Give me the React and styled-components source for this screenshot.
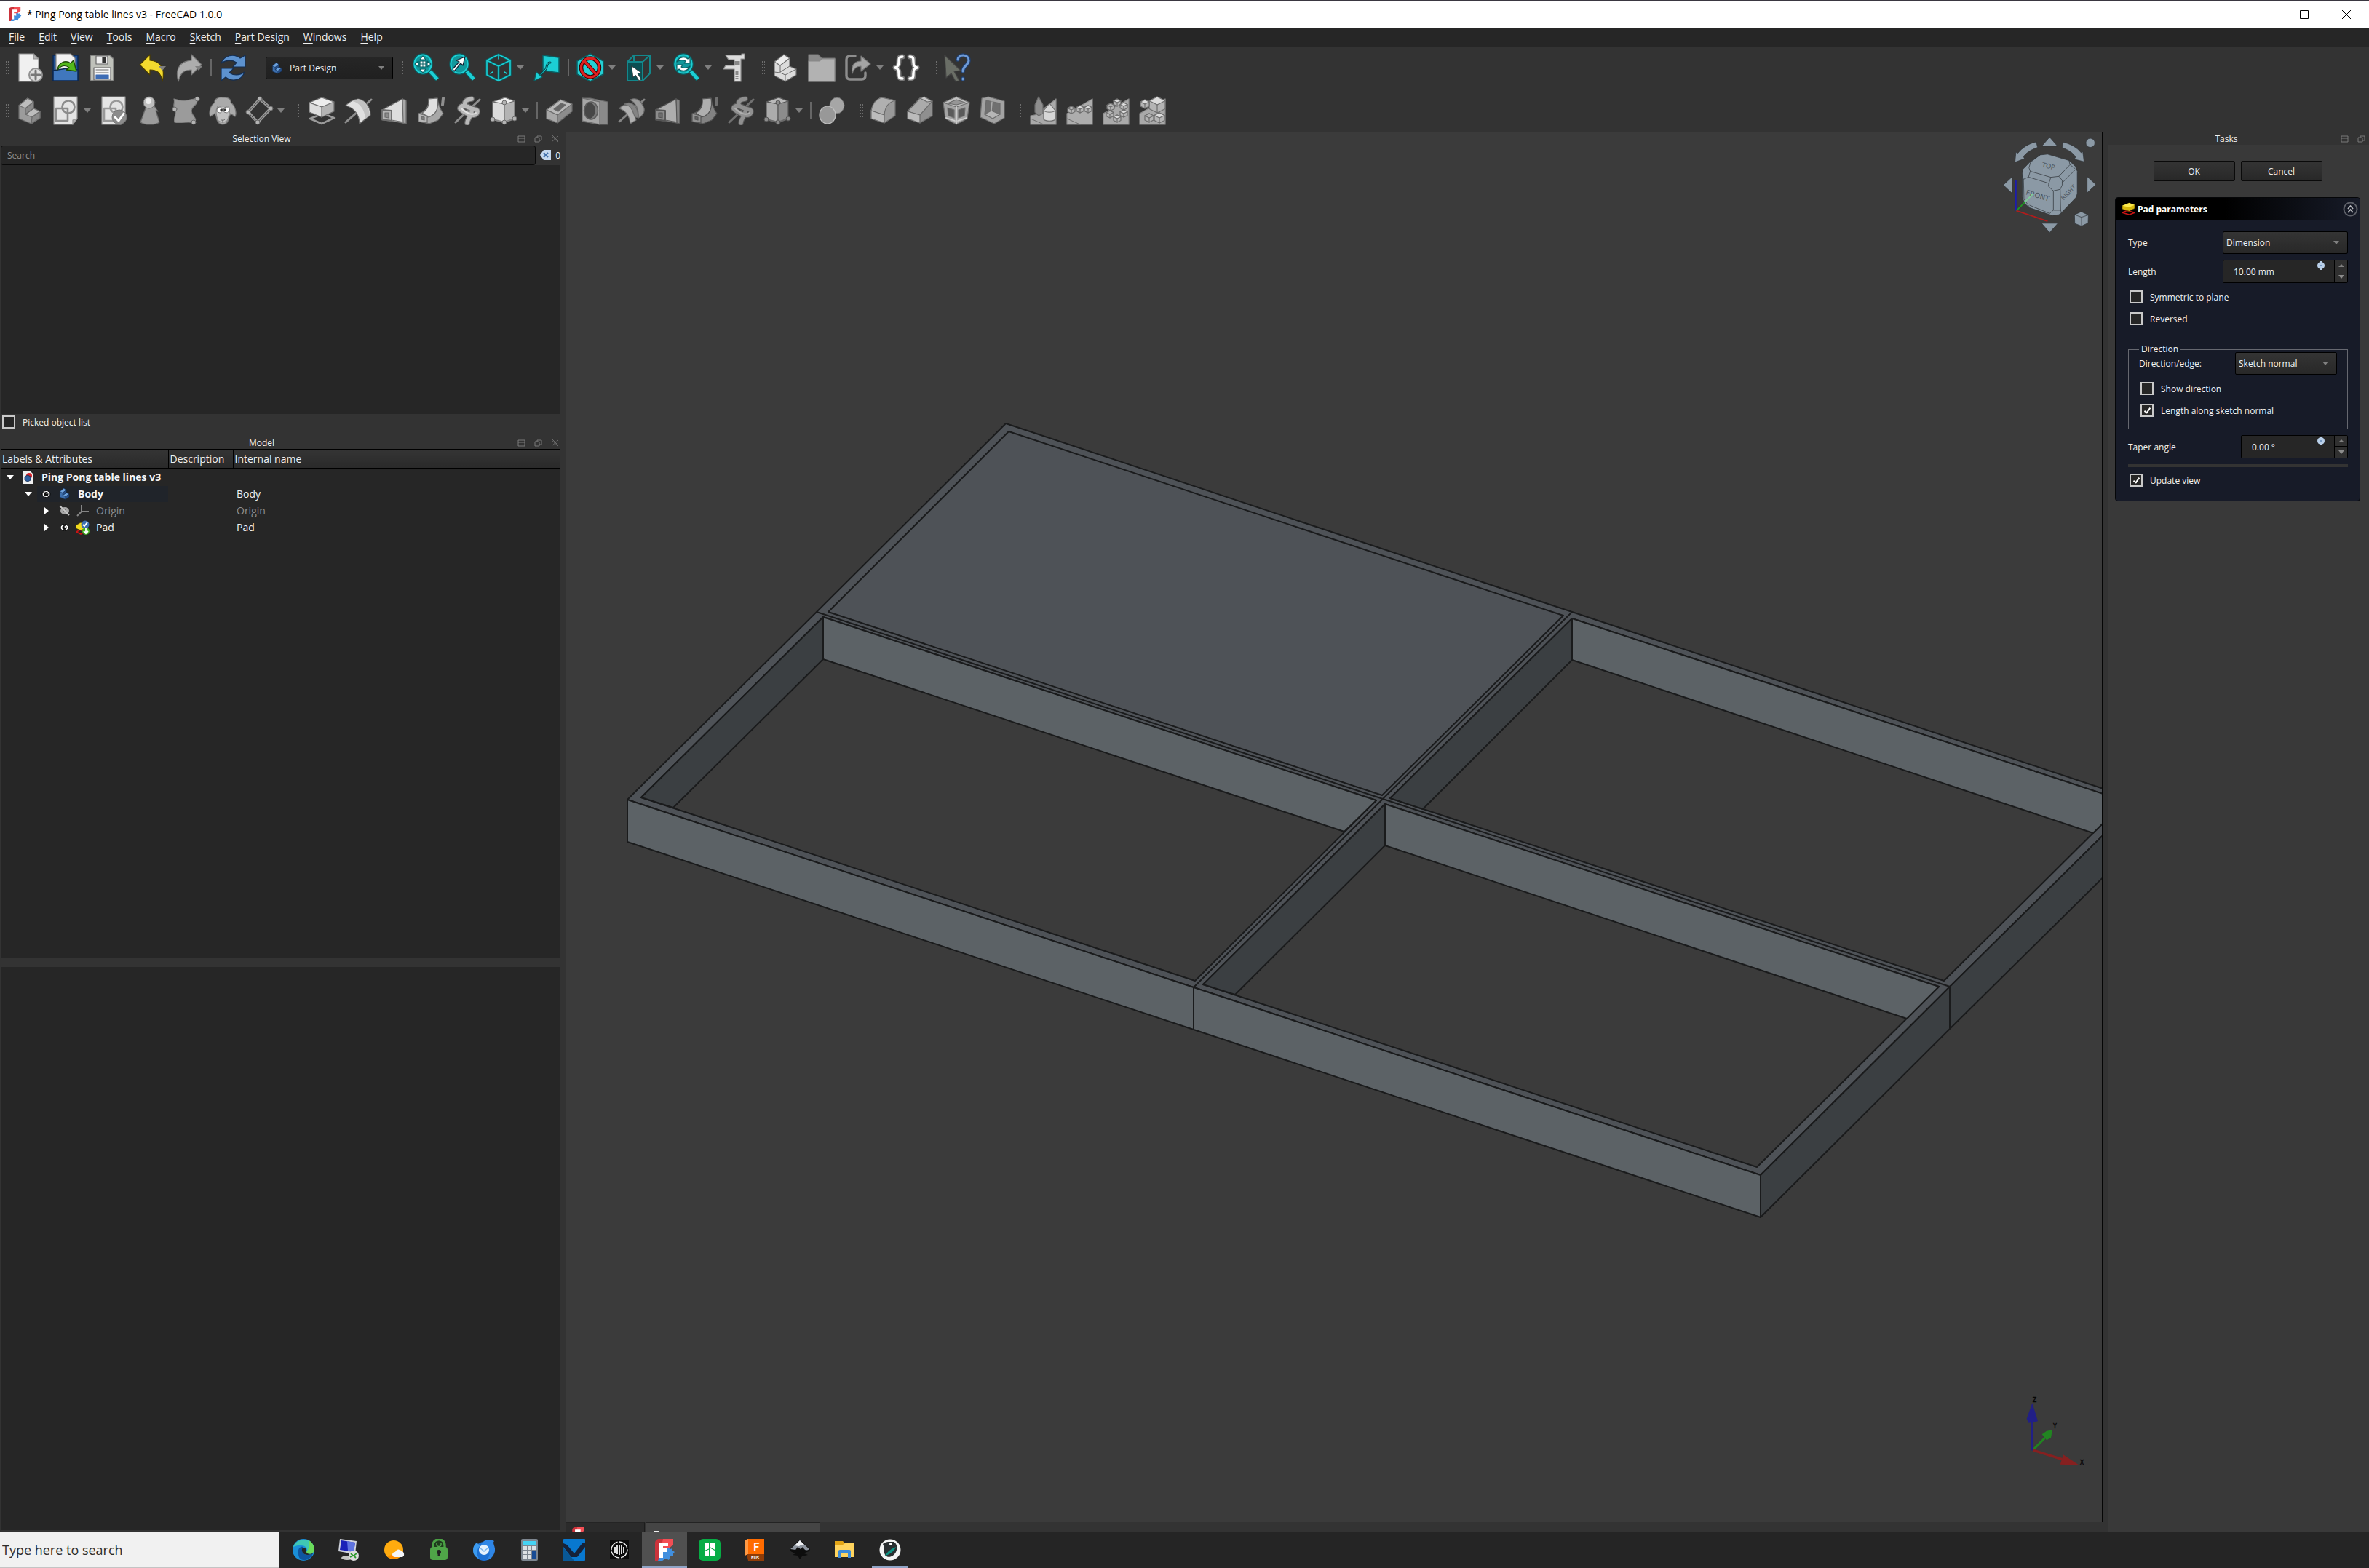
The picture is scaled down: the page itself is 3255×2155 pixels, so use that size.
import React from "react";
import styled, { createGlobalStyle, css } from "styled-components";

const GlobalStyle = createGlobalStyle`
  * { box-sizing: border-box; }
  html, body { margin: 0; padding: 0; background: #333333; }
  body, button, input, select, table {
    font-family: "Open Sans", "Noto Sans", "Liberation Sans", sans-serif;
    font-size: 12px;
    color: #f0f0f0;
  }
  button { background: none; border: 0; padding: 0; margin: 0; }
`;

/* ---------- frame ---------- */

const Window = styled.div`
  min-height: 100vh;
  display: flex;
  flex-direction: column;
  overflow: hidden;
`;

const TitleBar = styled.header`
  height: 38px;
  border-top: 1px solid #3a3741;
  background: #ffffff;
  display: flex;
  align-items: center;
  padding: 0 2px 0 11px;
`;

const Title = styled.h1`
  margin: 0 0 0 7px;
  flex: 1;
  font-size: 14px;
  font-weight: 400;
  color: #000000;
`;

const WindowButton = styled.button`
  width: 58px;
  height: 36px;
  display: grid;
  place-items: center;
`;

const MenuBar = styled.nav`
  height: 26px;
  background: #262626;
  display: flex;
  align-items: center;
  gap: 1px;
  padding-left: 3px;
`;

const MenuItem = styled.button`
  padding: 0 9px;
  font-size: 14px;
  line-height: 26px;
  u { text-underline-offset: 3px; text-decoration-thickness: 1px; }
`;

const ToolRow = styled.div`
  height: 59px;
  background: #333333;
  border-bottom: 1px solid #0c0c0c;
  display: flex;
  align-items: center;
  gap: 5px;
`;

const ToolGroup = styled.div`
  display: flex;
  align-items: center;
`;

const Handle = styled.span`
  width: 6px;
  height: 20px;
  margin: 0 2px 0 7px;
  background-image: radial-gradient(circle, #6e6e6e 1px, transparent 1px);
  background-size: 3px 4px;
`;

const ToolSeparator = styled.span`
  width: 2px;
  height: 24px;
  margin: 0 4px;
  background: #666666;
`;

const ToolButton = styled.button`
  width: ${(p) => (p.$menu ? 66 : 50)}px;
  height: 50px;
  padding-left: 5px;
  display: flex;
  align-items: center;
  gap: 5px;
  svg { width: 40px; height: 40px; flex: none; }
  &::after {
    content: ${(p) => (p.$menu ? '""' : "none")};
    border: 5px solid transparent;
    border-top: 6px solid #7f7f7f;
    border-bottom: 0;
  }
`;

const HistoryButton = styled(ToolButton)`
  position: relative;
  &::after {
    content: "";
    position: absolute;
    right: 7px;
    top: 23px;
    border: 5px solid transparent;
    border-top: 6px solid #7f7f7f;
    border-bottom: 0;
  }
`;

/* ---------- form parts ---------- */

const SelectBox = styled.span`
  position: relative;
  display: block;
  width: ${(p) => p.$width}px;
  height: 31px;
  svg { position: absolute; left: 7px; top: 7px; width: 17px; height: 17px; pointer-events: none; }
  &::after {
    content: "";
    position: absolute;
    right: 12px;
    top: 13px;
    border: 4px solid transparent;
    border-top: 5px solid #808080;
    border-bottom: 0;
  }
  select {
    appearance: none;
    width: 100%;
    height: 100%;
    padding: 0 20px 0 ${(p) => (p.$icon ? 32 : 4)}px;
    border: 1px solid #000000;
    border-radius: 2px;
    background: linear-gradient(${(p) => (p.$icon ? "#262626, #202020" : "#343434, #282828")});
  }
`;

const CheckRow = styled.label`
  display: flex;
  align-items: center;
  gap: 10px;
  height: 18px;
  padding-left: ${(p) => p.$indent || 0}px;
  input {
    appearance: none;
    margin: 0;
    width: 18px;
    height: 18px;
    border: 2px solid #c9c9c9;
    background: #262626;
    display: grid;
    place-items: center;
  }
  input:checked::after {
    content: "";
    width: 3px;
    height: 7px;
    margin-bottom: 2px;
    border: solid #ffffff;
    border-width: 0 2px 2px 0;
    transform: rotate(35deg);
  }
`;

const FieldRow = styled.div`
  display: flex;
  align-items: center;
  justify-content: space-between;
  height: ${(p) => p.$height || 31}px;
`;

const SpinBox = styled.span`
  width: ${(p) => p.$width}px;
  height: 32px;
  border: 1px solid #000000;
  border-radius: 2px;
  background: #262626;
  display: flex;
  input {
    flex: 1;
    min-width: 0;
    padding: 0 0 0 14px;
    border: 0;
    background: transparent;
  }
  > svg { margin: 1px 12px 0 0; width: 12px; height: 12px; }
`;

const Steppers = styled.span`
  width: 18px;
  display: grid;
  grid-template-rows: 1fr 1fr;
  background: #303030;
  border-left: 1px solid #000000;
`;

const StepButton = styled.button`
  display: grid;
  place-items: center;
  border-bottom: ${(p) => (p.$up ? "1px solid #000000" : "0")};
  &::after {
    content: "";
    border: 4px solid transparent;
    ${(p) => (p.$up ? "border-bottom: 4px solid #808080; border-top: 0;" : "border-top: 5px solid #8c8c8c; border-bottom: 0;")}
  }
`;

/* ---------- main area ---------- */

const Main = styled.main`
  flex: 1;
  display: grid;
  grid-template-columns: 777px minmax(0, 1fr) 366px;
`;

const LeftDock = styled.aside`
  background: #333333;
  padding: 0 7px 0 1px;
  display: grid;
  grid-template-columns: minmax(0, 1fr);
  grid-template-rows: 17px 28px 342fr 31px 17px 700fr 12px 774fr 2px;
`;

const DockTitle = styled.div`
  height: 17px;
  display: flex;
  align-items: center;
  justify-content: flex-end;
  position: relative;
  padding-right: ${(p) => p.$right}px;
  gap: 12px;
  background: #333333;
  h2 {
    position: absolute;
    left: 0;
    right: ${(p) => p.$inset}px;
    margin: 0;
    text-align: center;
    font-size: 12px;
    line-height: 16px;
    font-weight: 400;
  }
  button { position: relative; display: grid; }
`;

const SearchRow = styled.div`
  display: flex;
  align-items: center;
  gap: 6px;
  input {
    flex: 1;
    min-width: 0;
    height: 27px;
    padding: 0 8px;
    border: 1px solid #0a0a0a;
    border-radius: 3px;
    background: #262626;
  }
  input::placeholder { color: #8f8f8f; opacity: 1; }
  svg { width: 15px; height: 14px; display: block; }
`;

const DarkPane = styled.div`
  background: #262626;
  min-height: 0;
`;

const PickRow = styled.div`
  padding: 2px 0 0 2px;
`;

const Tree = styled.table`
  width: 100%;
  border-collapse: collapse;
  table-layout: fixed;
  font-size: 14px;
  th {
    height: 26px;
    padding: 0 2px;
    line-height: 22px;
    text-align: left;
    font-weight: 400;
    border: 1px solid #000000;
    border-left: 0;
    background: linear-gradient(#343434, #2a2a2a);
  }
  td { height: 23px; padding: 0; line-height: 22px; white-space: nowrap; }
  td:last-child { padding-left: 5px; }
`;

const TreeLine = styled.div`
  display: flex;
  align-items: center;
  height: 23px;
  margin-left: ${(p) => p.$level * 25}px;
  color: ${(p) => (p.$dim ? "#8f8f8f" : "#f5f5f5")};
  font-weight: ${(p) => (p.$bold ? 700 : 400)};
`;

const TreeCell = styled.div`
  display: flex;
  align-items: center;
  flex: 1;
  background: ${(p) => (p.$active ? "#20242a" : "transparent")};
  > span:last-child { margin-left: 6px; line-height: 22px; }
`;

const Slot = styled.span`
  width: 25px;
  display: grid;
  place-items: center;
`;

const Expander = styled.button`
  width: 25px;
  height: 22px;
  display: grid;
  place-items: center;
  &::after {
    content: "";
    border: 5px solid transparent;
    ${(p) =>
      p.$open
        ? css`border-top: 6px solid #ffffff; border-bottom: 0;`
        : css`border-left: 6px solid #ffffff; border-right: 0;`}
  }
`;

const Dim = styled.span`
  color: ${(p) => (p.$on ? "#8f8f8f" : "#f0f0f0")};
`;

const Center = styled.section`
  display: grid;
  grid-template-rows: minmax(0, 1fr) 13px;
  min-width: 0;
`;

const Viewport = styled.div`
  position: relative;
  background: #3b3b3b;
  border-right: 1px solid #050505;
  overflow: hidden;
  > svg:first-child { display: block; width: 100%; height: 100%; }
`;

const NavCubeBox = styled.div`
  position: absolute;
  right: 6px;
  top: 5px;
`;

const AxisBox = styled.div`
  position: absolute;
  right: 18px;
  bottom: 72px;
`;

const TabStrip = styled.div`
  background: #333333;
  display: flex;
  gap: 2px;
  overflow: hidden;
`;

const DocTab = styled.div`
  width: ${(p) => p.$width}px;
  padding: 6px 0 0 8px;
  border-top: 1px solid #242424;
  border-right: 1px solid #1c1c1c;
  background: ${(p) => (p.$active ? "#454545" : "#2b2b2b")};
`;

const RightDock = styled.aside`
  border-left: 7px solid #333333;
  background: #393939;
`;

const DialogButtons = styled.div`
  display: flex;
  justify-content: center;
  gap: 8px;
  padding: 22px 2px 22px 0;
`;

const DialogButton = styled.button`
  width: 112px;
  height: 28px;
  border: 1px solid #0a0a0a;
  border-radius: 2px;
  background: linear-gradient(#343434, #282828);
`;

const TaskBox = styled.section`
  margin: 0 12px 0 10px;
  border: 1px solid #050608;
  border-radius: 4px;
  background: #171b28;
  overflow: hidden;
`;

const TaskHeader = styled.div`
  height: 30px;
  display: flex;
  align-items: center;
  gap: 3px;
  padding: 0 2px 0 8px;
  background: linear-gradient(90deg, #000000 45%, #171b28);
  h2 { flex: 1; margin: 0; font-size: 12px; font-weight: 700; color: #ffffff; }
  svg { display: block; }
`;

const TaskBody = styled.div`
  display: flex;
  flex-direction: column;
  padding: 16px 16px 19px 17px;
`;

const Space = styled.div`
  height: ${(p) => p.$size}px;
`;

const Group = styled.fieldset`
  min-width: 0;
  margin: 0;
  padding: 0 14px 16px;
  border: 1px solid #666870;
  legend { padding: 0 3px; line-height: 8px; margin: 0; }
`;

const Rule = styled.div`
  height: 4px;
  background: #333333;
`;

/* ---------- taskbar ---------- */

const Taskbar = styled.footer`
  height: 50px;
  background: #252525;
  display: flex;
  align-items: stretch;
`;

const TaskSearch = styled.input`
  width: 383px;
  margin-right: 3px;
  padding: 0 3px;
  border: 0;
  border-bottom: 1px solid #c4c4c4;
  background: #f1f1f1;
  font-size: 18px;
  color: #222222;
  &::placeholder { color: #2d2d2d; opacity: 1; }
`;

const TaskButton = styled.button`
  width: 62px;
  display: grid;
  place-items: center;
  position: relative;
  background: ${(p) => (p.$active ? "#505050" : "transparent")};
  svg { width: 30px; height: 30px; }
  &::after {
    content: ${(p) => (p.$running ? '""' : "none")};
    position: absolute;
    bottom: 0;
    left: ${(p) => (p.$active ? 0 : 6)}px;
    right: ${(p) => (p.$active ? 0 : 6)}px;
    height: 3px;
    background: #90a4c6;
  }
`;

/* ---------- drawings ---------- */

const L = "#dcdcdc";
const M = "#b4b4b4";
const D = "#929292";
const K = "#6c6c6c";
const T = "#1ccfd4";
const TD = "#0a5f63";

const Icon = ({ children, box = 40 }) => (
  <svg viewBox={`0 0 ${box} ${box}`} fill="none" strokeLinejoin="round" strokeLinecap="round" aria-hidden="true">
    {children}
  </svg>
);
const G = ({ d, f = M, s = K, w = 1.2 }) => <path d={d} fill={f} stroke={s} strokeWidth={w} />;
const C = ({ x, y, r, f = M, s = K, w = 1 }) => <circle cx={x} cy={y} r={r} fill={f} stroke={s} strokeWidth={w} />;

const Step = ({ a = L, b = M, c = D, s = K }) => (
  <Icon>
    <G d="M6 13L18 3L26 8V17L35 21V30L23 38L6 31Z" f={b} s={s} />
    <G d="M6 13L18 3L26 8L15 17Z" f={a} s={s} />
    <G d="M15 25L26 17L35 21L24 29Z" f={a} s={s} />
    <G d="M15 17L26 8V17L15 25Z" f={c} s={s} />
    <G d="M24 29L35 21V30L23 38Z" f={c} s={s} />
  </Icon>
);

const Lens = ({ children }) => (
  <Icon>
    <path d="M26 25L36 36" stroke={TD} strokeWidth="7" strokeLinecap="butt" />
    <path d="M26 25L36 36" stroke={T} strokeWidth="4.6" strokeLinecap="butt" />
    <ellipse cx="16" cy="15" rx="13" ry="14" fill="#12989c" stroke={TD} strokeWidth="1.5" />
    <ellipse cx="16" cy="15" rx="11.6" ry="12.6" stroke={T} strokeWidth="2" />
    {children}
  </Icon>
);

const Cubelet = ({ x, y, r = 5, l = L }) => (
  <g>
    <G d={`M${x} ${y - r}L${x + r} ${y - r / 2}V${y + r / 2}L${x} ${y + r}L${x - r} ${y + r / 2}V${y - r / 2}Z`} f={M} />
    <G d={`M${x} ${y - r}L${x + r} ${y - r / 2}L${x} ${y}L${x - r} ${y - r / 2}Z`} f={l} />
    <G d={`M${x} ${y}V${y + r}`} />
  </g>
);

const Page = () => (
  <>
    <G d="M4 1H36V31L30 39H4Z" f="#e4e4e4" s={D} />
    <G d="M36 31L30 33V39Z" f={M} s={D} />
  </>
);

const I = {
  newDoc: (
    <Icon>
      <G d="M6 1H26L33 8V39H6Z" f="#f0f0f0" s={D} />
      <G d="M26 1V8H33Z" f={M} s={D} />
      <C x={29} y={30} r={9} f="#dedede" s={D} w={2} />
      <path d="M29 24V36M23 30H35" stroke="#777" strokeWidth="3" />
    </Icon>
  ),
  open: (
    <Icon>
      <G d="M3 3H37V38H3Z" f="#1f4f94" s="#0d2850" w={1.5} />
      <G d="M7 1H27L33 7V26H7Z" f="#f2f2f2" s="#888" />
      <G d="M3 24L22 21L37 23V38H3Z" f="#4077bd" s="#0d2850" w={1.5} />
      <G d="M9 23C10 13 20 9 27 14L31 10L35 25L21 23L25 20C20 16 14 17 9 23Z" f="#53b81c" s="#1e4a07" w={1.4} />
    </Icon>
  ),
  save: (
    <Icon>
      <G d="M4 3H31L36 8V38H4Z" f="#bfc1ba" s="#777" w={1.5} />
      <G d="M12 4H28V15H12Z" f="#efefef" s="#666" />
      <G d="M21 6H25V13H21Z" f="#333" s="#333" />
      <G d="M9 20H32V37H9Z" f="#f6f6f6" s="#666" />
      <path d="M12 23H29M12 27H29" stroke="#999" strokeWidth="1.3" />
      <G d="M12 30H29V35H12Z" f="#3e6db5" s="#3e6db5" />
    </Icon>
  ),
  undo: (
    <Icon>
      <G d="M2 16L16 2V10C30 11 38 21 33 39C31 27 26 23 16 23V30Z" f="#f3da2e" s="#4a3c00" w={1.2} />
    </Icon>
  ),
  redo: (
    <Icon>
      <G d="M37 16L23 2V10C8 11 0 21 5 39C8 27 13 23 23 23V30Z" f="#adadad" s="#777" />
    </Icon>
  ),
  refresh: (
    <Icon>
      <G d="M4 14C8 3 21 0 30 7L37 3V19H20L25 13C19 9 11 9 4 14Z" f="#5d92cf" s="#142e52" w={1.2} />
      <G d="M36 26C32 38 19 40 10 33L4 38V21H21L15 27C21 31 29 31 36 26Z" f="#5d92cf" s="#142e52" w={1.2} />
    </Icon>
  ),
  zoomFit: (
    <Lens>
      <G d="M16 4L20 9H12ZM16 27L20 22H12ZM5 15L10 11V19ZM27 15L22 11V19Z" f="#fff" s={TD} />
      <G d="M12 11H20V19H12Z" f="#fff" s={TD} />
      <path d="M16 11V19M12 15H20" stroke={TD} />
    </Lens>
  ),
  zoomSel: (
    <Lens>
      <G d="M9 25L7 22L16 12L12 10L24 5L21 17L18 14Z" f="#fff" s="#123" />
    </Lens>
  ),
  iso: (
    <Icon>
      <path d="M20 2L36 10V30L20 38L4 30V10ZM4 10L20 18L36 10M20 18V38" stroke={TD} strokeWidth="3.6" />
      <path d="M20 2L36 10V30L20 38L4 30V10ZM4 10L20 18L36 10M20 18V38" stroke={T} strokeWidth="1.6" />
      <path d="M20 3V8M12 26L9 28M28 26L31 28" stroke={T} strokeWidth="1.6" />
    </Icon>
  ),
  align: (
    <Icon>
      <G d="M15 3L37 6V27L15 24Z" f={T} s={TD} w={1.5} />
      <path d="M25 13C20 13 21 18 19 22L8 34" stroke="#04484c" strokeWidth="3" />
      <path d="M25 13C20 13 21 18 19 22L8 34" stroke={T} strokeWidth="1" />
      <G d="M3 38L6 26L14 33Z" f={T} s={TD} />
    </Icon>
  ),
  drawStyle: (
    <Icon>
      <G d="M20 1L38 11V29L20 39L2 29V11Z" f="#25d0d4" s={TD} w={1.5} />
      <ellipse cx="20" cy="20" rx="12.5" ry="13" stroke="#3a0000" strokeWidth="5.4" />
      <path d="M12 11L28 29" stroke="#3a0000" strokeWidth="5.4" />
      <ellipse cx="20" cy="20" rx="12.5" ry="13" stroke="#e02020" strokeWidth="3.4" />
      <path d="M12 11L28 29" stroke="#e02020" strokeWidth="3.4" />
    </Icon>
  ),
  boxSelect: (
    <Icon>
      <G d="M5 12H26V38H5Z" f="#0c4e52" s="none" />
      <path d="M5 12L14 3H36V28L26 38H5ZM5 12H26V38M26 12L36 3M14 3V12" stroke="#13888c" strokeWidth="2" />
      <G d="M11 18L24 27L19 28L24 36L21 38L16 30L13 33Z" f="#fff" s="#333" w={0.8} />
    </Icon>
  ),
  sync: (
    <Lens>
      <G d="M7 12C10 5 18 4 22 8L25 6V14H17L19 11C16 9 11 9 7 12Z" f="#fff" s={TD} />
      <G d="M25 18C22 25 14 26 10 22L7 24V16H15L13 19C16 21 21 21 25 18Z" f="#fff" s={TD} />
    </Lens>
  ),
  caliper: (
    <Icon>
      <G d="M8 3H30V1H34V8H29V39H20V22H5L8 17H20V9H12Z" f={L} s={D} />
      <path d="M22 26H25M22 29H25M22 32H25M22 35H25M21 12H27M21 15H27" stroke={K} strokeWidth="1.4" />
    </Icon>
  ),
  part: (
    <Icon>
      <G d="M5 12L18 2L26 7V18L35 22V30L20 39L5 31Z" f={L} />
      <G d="M5 12L18 2L26 7L13 17Z" f="#ededed" />
      <path d="M13 17V26M5 26L13 27L20 30L35 22M20 30V39M13 26L26 18" stroke={K} />
    </Icon>
  ),
  folder: (
    <Icon>
      <G d="M2 2H15L20 7H38V39H2Z" f="#8a8a8a" s="#777" />
      <G d="M2 11H17L20 8H38V39H2Z" f="#b2b2b2" s="#888" />
    </Icon>
  ),
  exporter: (
    <Icon>
      <path d="M16 4H9Q4 4 4 9V31Q4 36 9 36H25Q30 36 30 31V27" stroke="#8d8d8d" strokeWidth="3.4" />
      <G d="M12 28C10 16 16 11 24 11V4L37 15L24 25V18C18 18 14 21 12 28Z" f="#a4a4a4" s="#777" />
    </Icon>
  ),
  braces: (
    <Icon>
      {["#777", "#fff"].map((c, i) => (
        <path
          key={c}
          d="M15 5C10 5 10 7 10 12C10 17 9 19 5 20C9 21 10 23 10 28C10 33 10 35 15 35M25 5C30 5 30 7 30 12C30 17 31 19 35 20C31 21 30 23 30 28C30 33 30 35 25 35"
          stroke={c}
          strokeWidth={i ? 3.4 : 7}
        />
      ))}
    </Icon>
  ),
  whats: (
    <Icon>
      <G d="M3 3L25 24L16 25L23 38L18 39L12 28L5 34Z" f="#6a6e66" s="#444" />
      <path d="M21 9C22 1 36 1 36 10C36 17 28 17 28 25M28 35V36" stroke="#1f3f70" strokeWidth="5.5" />
      <path d="M21 9C22 1 36 1 36 10C36 17 28 17 28 25M28 35V36" stroke="#6f9bd6" strokeWidth="3" />
    </Icon>
  ),
  sketch: (
    <Icon>
      <Page />
      <circle cx="24" cy="15" r="8.5" stroke="#8c8c8c" strokeWidth="2.6" />
      <path d="M7 17H23V34H7Z" stroke="#8c8c8c" strokeWidth="2.6" />
    </Icon>
  ),
  validate: (
    <Icon>
      <Page />
      <circle cx="24" cy="15" r="8.5" stroke="#999" strokeWidth="2.6" />
      <path d="M7 17H23V34H7Z" stroke="#999" strokeWidth="2.6" />
      <C x={28} y={29} r={10} f="#8b8b8b" s="#777" />
      <path d="M22 29L27 34L34 24" stroke="#fff" strokeWidth="3" />
    </Icon>
  ),
  pawn: (
    <Icon>
      <G d="M15 14L26 14L31 21L28 20L33 36C28 40 12 40 7 36Z" f="#9c9c9c" s={K} />
      <C x={19} y={9} r={8} f="#bdbdbd" />
      <C x={18} y={7} r={4} f="#ececec" s="none" />
    </Icon>
  ),
  patch: (
    <Icon>
      <G d="M3 4C12 7 20 7 34 3C38 12 26 14 27 21C28 29 36 30 31 37C22 34 13 38 4 36C2 28 8 24 4 18C1 12 5 9 3 4Z" f="#9b9b9b" s="#838383" />
      <C x={35} y={4} r={3} />
      <C x={4} y={18} r={3} />
      <C x={30} y={36} r={3} />
    </Icon>
  ),
  sheep: (
    <Icon>
      <G d="M9 9C8 4 15 1 20 2C26 1 32 4 31 9C36 12 40 22 37 28L31 24L29 28C28 36 24 39 20 39C16 39 12 36 11 28L9 24L3 28C0 22 4 12 9 9Z" f="#aaa" s="#777" />
      <G d="M13 14H28C31 20 28 30 26 34Q20 38 14 34C11 28 10 20 13 14Z" f="#c2c2c2" s="#888" />
      <C x={16} y={19} r={4} f="#fff" s="#777" />
      <C x={25} y={19} r={4} f="#fff" s="#777" />
      <C x={18} y={19} r={1.2} f="#333" s="#333" />
      <C x={23} y={19} r={1.2} f="#333" s="#333" />
      <path d="M17 32Q20 35 23 32M20 33V36" stroke="#666" />
    </Icon>
  ),
  diamond: (
    <Icon>
      <path d="M5 22L21 4L36 17L18 36Z" stroke="#999" strokeWidth="4" />
      <path d="M5 22L21 4L36 17L18 36Z" stroke="#4a4a4a" strokeWidth="1" />
      <C x={5} y={22} r={3} />
      <C x={21} y={4} r={3} />
      <C x={36} y={17} r={3} />
      <C x={18} y={36} r={3} />
    </Icon>
  ),
  pad: (
    <Icon>
      <path d="M4 31L22 24L37 30L20 38Z" stroke="#9a9a9a" strokeWidth="2.5" />
      <G d="M3 9L20 2L37 8V21L20 29L3 22Z" f={M} />
      <G d="M3 9L20 2L37 8L20 15Z" f="#ececec" />
      <G d="M3 9L20 15V29L3 22Z" f={L} />
    </Icon>
  ),
  revolve: (
    <Icon>
      <path d="M3 36L38 5" stroke="#8f8f8f" strokeWidth="3" />
      <G d="M3 13C8 8 13 5 20 4C29 5 37 14 37 26L22 38C22 25 14 16 3 13Z" f="#e0e0e0" />
      <path d="M20 4C30 6 35 15 36 26L30 31C29 18 22 9 12 7Z" fill="#c2c2c2" />
    </Icon>
  ),
  loft: (
    <Icon>
      <G d="M3 19L31 4L36 8V38L20 35L3 33Z" f="#cfcfcf" />
      <G d="M3 19L31 4L33 36L16 33V20Z" f="#dedede" />
      <G d="M31 4L36 6V38L32 37Z" f="#a8a8a8" />
      <G d="M3 19L16 20V34L3 32Z" f={M} w={1.8} />
      <G d="M7 23H12V30L7 29Z" f="#8b8b8b" />
    </Icon>
  ),
  sweep: (
    <Icon>
      <path d="M37 3L36 12" stroke="#8f8f8f" strokeWidth="4" />
      <G d="M17 4L29 3C30 12 33 18 37 24L30 33L18 38L3 35V24C13 22 18 14 17 4Z" f="#a8a8a8" />
      <G d="M17 4L29 3C31 16 28 26 16 29L8 23C15 19 18 12 17 4Z" f="#e0e0e0" />
      <G d="M3 24L15 27V37L3 35Z" f="#b8b8b8" />
      <G d="M7 28L11 29V33L7 32Z" f="#7c7c7c" />
    </Icon>
  ),
  helix: (
    <Icon>
      <path d="M4 36L37 5" stroke="#8f8f8f" strokeWidth="3" />
      <path d="M26 4C16 5 14 11 20 15C29 19 37 17 33 24C29 30 14 22 10 17M10 17C10 12 20 12 26 18C28 26 20 30 20 37" stroke={K} strokeWidth="7.6" />
      <path d="M26 4C16 5 14 11 20 15C29 19 37 17 33 24C29 30 14 22 10 17M10 17C10 12 20 12 26 18C28 26 20 30 20 37" stroke="#b9b9b9" strokeWidth="5.4" />
      <path d="M12 17C19 24 27 27 32 23" stroke="#e2e2e2" strokeWidth="2" />
    </Icon>
  ),
  prim: (
    <Icon>
      <G d="M5 8L22 2L35 7V30L21 37L5 32Z" f={M} />
      <G d="M5 8L22 2L35 7L21 11Z" f="#eee" />
      <G d="M5 8L21 11V37L5 32Z" f={L} />
      <path d="M21 10V37M21 36L5 32M21 36L35 31" stroke="#888" strokeWidth="2" />
      <C x={21} y={9} r={3} />
      <C x={5} y={32} r={3} />
      <C x={21} y={36} r={3} />
      <C x={35} y={31} r={3} />
    </Icon>
  ),
  pocket: (
    <Icon>
      <G d="M3 19L22 5L38 11V21L18 37L3 31Z" f="#8c8c8c" />
      <G d="M3 19L22 5L38 11L18 26Z" f="#b9b9b9" />
      <G d="M13 18L23 10L29 12L19 21Z" f="#666" />
      <G d="M3 19L18 26V37L3 31Z" f="#a8a8a8" />
    </Icon>
  ),
  hole: (
    <Icon>
      <G d="M2 3H13L37 8V39L26 39L2 35Z" f="#8a8a8a" />
      <G d="M2 3L26 8V39L2 34Z" f="#a6a6a6" />
      <ellipse cx="14" cy="20" rx="9.5" ry="12" fill="#7a7a7a" stroke="#5c5c5c" strokeWidth="1.5" />
      <path d="M12 9C22 11 23 26 13 31C2 29 4 11 12 9Z" fill="#474747" />
    </Icon>
  ),
  groove: (
    <Icon>
      <path d="M3 35L37 5" stroke="#858585" strokeWidth="3" />
      <G d="M18 5C28 1 33 7 37 17C38 23 34 28 29 30C30 18 26 10 18 5Z" f="#9a9a9a" />
      <G d="M10 11C20 6 29 14 29 30L22 28C20 20 16 14 10 11Z" f="#838383" />
      <G d="M3 17C10 9 17 12 21 20L26 33L18 38C17 27 11 20 3 17Z" f="#b0b0b0" />
    </Icon>
  ),
  dressA: (
    <Icon>
      <G d="M3 20C5 8 11 4 17 2L36 6V27L21 37L3 31Z" f="#999" />
      <G d="M3 20C5 8 11 4 17 2L36 6C26 9 22 15 21 26Z" f="#b0b0b0" />
      <G d="M3 20L21 26V37L3 31Z" f="#bcbcbc" />
    </Icon>
  ),
  dressB: (
    <Icon>
      <G d="M3 21L20 3L37 7V27L20 37L3 31Z" f="#8f8f8f" />
      <G d="M3 21L20 3L37 7L20 26Z" f="#ababab" />
      <G d="M3 21L20 26V37L3 31Z" f="#bcbcbc" />
      <G d="M20 3L26 1L37 7L30 8Z" f="#c6c6c6" />
    </Icon>
  ),
  draft: (
    <Icon>
      <G d="M2 9L20 1L38 9L35 31L20 39L5 31Z" f="#a4a4a4" />
      <G d="M2 9L20 1L38 9L20 15Z" f="#c0c0c0" />
      <G d="M8 10L20 5L32 9L20 12Z" f="#969696" />
      <G d="M8 16L17 19V30L9 27Z" f="#5a5a5a" />
      <G d="M32 16L23 19V30L31 27Z" f="#5a5a5a" />
      <path d="M20 15V38M6 30L18 34M34 30L22 34" stroke="#d0d0d0" strokeWidth="1.8" />
    </Icon>
  ),
  thickness: (
    <Icon>
      <G d="M5 3L14 1L36 7V30L22 38L3 29Z" f="#a3a3a3" />
      <G d="M11 6L30 10V25L20 30L9 25Z" f="#707070" />
      <G d="M9 25L18 20L30 25L20 31Z" f="#b6b6b6" />
      <path d="M18 20L19 8" stroke="#aaa" strokeWidth="1.6" />
    </Icon>
  ),
  boolean: (
    <Icon>
      <ellipse cx="26" cy="13" rx="10" ry="11" fill="#a6a6a6" stroke={K} />
      <ellipse cx="13" cy="26" rx="11" ry="12" fill="#989898" stroke="#c0c0c0" strokeWidth="1.2" />
    </Icon>
  ),
  mirror: (
    <Icon>
      <G d="M2 27L18 24V19L37 4V39H2Z" f="#a9a9a9" s="#8a8a8a" />
      <G d="M13 1L19 12V24L13 27L8 22V12Z" f="#8e8e8e" />
      <G d="M20 20V32C23 35 33 35 36 32V20L28 10Z" f="#d6d6d6" />
      <path d="M20 20C23 23 33 23 36 20M2 31L20 39" stroke={K} />
    </Icon>
  ),
  linear: (
    <Icon>
      <G d="M2 24L37 4V39H2Z" f="#adadad" s="#8a8a8a" />
      <Cubelet x={8} y={19} l={M} />
      <Cubelet x={20} y={18} />
      <Cubelet x={31} y={18} />
      <path d="M2 31L20 39" stroke={K} />
    </Icon>
  ),
  polar: (
    <Icon>
      <G d="M2 24L37 4V39H2Z" f="#a9a9a9" s="#8a8a8a" />
      <Cubelet x={21} y={9} />
      <Cubelet x={12} y={15} l={M} />
      <Cubelet x={30} y={14} />
      <Cubelet x={11} y={25} l={M} />
      <Cubelet x={30} y={24} />
      <Cubelet x={21} y={31} />
    </Icon>
  ),
  multi: (
    <Icon>
      <G d="M2 24L37 4V39H2Z" f="#a9a9a9" s="#8a8a8a" />
      <Cubelet x={26} y={12} r={11} />
      <Cubelet x={9} y={11} r={6} />
      <Cubelet x={15} y={30} r={6} l={M} />
      <Cubelet x={29} y={30} r={7} />
    </Icon>
  ),
};
I.body = <Step a="#bdbdbd" b="#9c9c9c" c="#8a8a8a" s="#6c6c6c" />;
const BlueBody = <Step a="#6da2dd" b="#3e70ae" c="#27508a" s="#122c52" />;

const FreeCadLogo = ({ size = 30 }) => (
  <svg width={size} height={size} viewBox="0 0 30 30" aria-hidden="true">
    <path d="M2 5Q3 0 8 0H27V8L15 17L6 30H2Z" fill="#cb333b" />
    <path d="M13 0H27V8L8 24Z" fill="#ff585d" opacity="0.75" />
    <path d="M8 5H20V10H13V13H18V18H13V26H8Z" fill="#ffffff" />
    <path d="M20 12L23 14L26 13V16L29 18L27 20V23L23 24L21 29L17 27L12 30H6L8 26H13V18H18V13Z" fill="#418fde" />
  </svg>
);

const PadIcon = ({ size = 19 }) => (
  <svg width={size} height={size} viewBox="0 0 20 20" aria-hidden="true">
    <path d="M1 15L8 12L19 15L11 18Z" fill="none" stroke="#c81414" strokeWidth="1.6" />
    <path d="M1 5L11 1L19 4V9L11 13L1 10Z" fill="#d7b80c" stroke="#3f3500" strokeWidth="0.8" />
    <path d="M1 5L11 1L19 4L11 7Z" fill="#fbe94d" />
  </svg>
);

const Eye = () => (
  <svg width="13" height="10" viewBox="0 0 13 10" aria-hidden="true">
    <ellipse cx="6.5" cy="5" rx="5.5" ry="4.500" fill="#ffffff" stroke="#000000" />
    <circle cx="6.5" cy="5" r="3" fill="#111111" />
    <circle cx="7.5" cy="4" r="1" fill="#ffffff" />
  </svg>
);

const EyeOff = () => (
  <svg width="15" height="15" viewBox="0 0 15 15" aria-hidden="true">
    <ellipse cx="8" cy="8" rx="6" ry="5" fill="#a8a8a8" />
    <circle cx="8" cy="8" r="2" fill="#666666" />
    <path d="M1 1L14 14" stroke="#c8c8c8" strokeWidth="2" />
  </svg>
);

const DocIcon = () => (
  <svg width="13" height="18" viewBox="0 0 13 18" aria-hidden="true">
    <path d="M0 0H9L13 4V18H0Z" fill="#f0f0f0" />
    <circle cx="8" cy="7" r="4" fill="#d8232a" />
    <path d="M2 8L6 6L10 8V13L6 15L2 13Z" fill="#2e5ea0" stroke="#12294c" strokeWidth="0.8" />
  </svg>
);

const OriginIcon = () => (
  <svg width="18" height="17" viewBox="0 0 18 17" fill="none" stroke="#858585" strokeWidth="2" aria-hidden="true">
    <path d="M7 1V10L1 16M7 10H17" />
  </svg>
);

const PadTipIcon = () => (
  <svg width="19" height="20" viewBox="0 0 19 20" aria-hidden="true">
    <path d="M1 16L6 13L12 16L7 19Z" fill="none" stroke="#c81414" strokeWidth="1.6" />
    <path d="M0 7L7 3L14 6V11L7 14L0 11Z" fill="#f1d91e" stroke="#3f3500" strokeWidth="0.7" />
    <circle cx="13" cy="6" r="5.5" fill="#3d6fb0" />
    <path d="M10 6L12 8L16 3" stroke="#ffffff" strokeWidth="2" fill="none" />
    <circle cx="14" cy="15" r="5" fill="#3fae1c" />
    <path d="M14 11V17M11 15L14 18L17 15" stroke="#ffffff" strokeWidth="1.8" fill="none" />
  </svg>
);

const PinIcon = () => (
  <svg width="11" height="10" viewBox="0 0 11 10" fill="none" stroke="#7b7b7b" aria-hidden="true">
    <path d="M1 1H10V9H1ZM1 4H10" />
  </svg>
);
const FloatIcon = () => (
  <svg width="11" height="10" viewBox="0 0 11 10" fill="none" stroke="#7b7b7b" aria-hidden="true">
    <path d="M1 3H7V9H1ZM4 3V1H10V7H7" />
  </svg>
);
const CloseIcon = () => (
  <svg width="11" height="10" viewBox="0 0 11 10" fill="none" stroke="#6b6b6b" aria-hidden="true">
    <path d="M1 1L10 9M10 1L1 9M2 0L10 8" />
  </svg>
);

const ExprIcon = () => (
  <svg viewBox="0 0 12 12" aria-hidden="true">
    <circle cx="6" cy="6" r="5" fill="#b9cfe8" />
    <path d="M6 0V12" stroke="#b9cfe8" strokeWidth="3" />
    <path d="M4 5L8 7M8 5L4 7" stroke="#6a8fbd" />
  </svg>
);

/* frame model on the plate: top skin, side skins, then one cavity per cell */
const Model = () => (
  <svg viewBox="777 182 2111 1910" preserveAspectRatio="xMidYMid slice" role="img" aria-label="3D view">
    <g stroke="#1a1b1c" strokeWidth="2" strokeLinejoin="round">
      <path fill="#4e5257" d="M1382 582L2160 841L2938 1100L2679 1356L2419 1615L1640 1357L862 1099L1122 841Z" />
      <path fill="#5c6266" d="M862 1099L1640 1357V1415L862 1157ZM1640 1357L2419 1615V1673L1640 1415Z" />
      <path fill="#3b3f42" d="M2419 1615L2679 1356V1414L2419 1673ZM2679 1356L2938 1100V1158L2679 1414Z" />
      <path fill="#4e5257" d="M1386 593L2148 846L1899 1093L1138 841Z" />
      <path fill="none" d="M1122 841L1900 1098L2679 1356M2160 841L1900 1098L1640 1357" />

      <path fill="#3b3b3b" d="M1131 848L1891 1100L1642 1348L881 1096Z" />
      <path fill="#5c6266" d="M1131 848L1891 1100L1847 1143L1131 906Z" />
      <path fill="#3b3f42" d="M1131 848V906L925 1110L881 1096Z" />

      <path fill="#3b3b3b" d="M2160 850L2920 1101L2671 1348L1910 1097Z" />
      <path fill="#5c6266" d="M2160 850L2920 1101L2876 1145L2160 907Z" />
      <path fill="#3b3f42" d="M2160 850V907L1955 1112L1910 1097Z" />

      <path fill="#3b3b3b" d="M1903 1105L2664 1356L2414 1604L1653 1353Z" />
      <path fill="#5c6266" d="M1903 1105L2664 1356L2620 1400L1903 1162Z" />
      <path fill="#3b3f42" d="M1903 1105V1162L1697 1367L1653 1353Z" />
    </g>
  </svg>
);

const CubeLabel = styled.text`
  font: 400 ${(p) => p.$size}px "DejaVu Sans", sans-serif;
  fill: #4d565e;
`;

const NavCube = () => (
  <svg width="132" height="133" viewBox="140 50 375 385" role="img" aria-label="Navigation cube">
    <g fill="#8b99a5" stroke="#2b3034" strokeWidth="2" strokeLinejoin="round">
      <path d="M328 54L359 90H297ZM328 434L361 397H296ZM144 245L179 212V278ZM512 243L477 211V276Z" />
      <path d="M275 73L280 95C250 106 233 118 224 132L228 140L190 154L194 114L202 118C218 97 244 80 275 73Z" />
      <path d="M380 74L378 96C405 106 424 118 431 134L426 142L465 152L460 112L453 116C438 96 410 80 380 74Z" />
      <circle cx="490" cy="77" r="18" />
      <path d="M454 351L482 364L481 396L455 408L428 398L427 363Z" />
      <path d="M427 363L455 373L482 364M455 373V408" fill="none" />
      <path d="M320 122L405 147L430 170L438 190V280L432 295L375 355L365 363L338 366L248 335L228 318L219 290V200L222 182L250 153L290 125Z" />
      <g fill="none">
        <path d="M290 125L252 154L246 176L251 190L333 214L365 210L409 164L405 147" />
        <path d="M251 190L244 213L224 222L219 208M244 213L325 238L333 214M325 238L323 250L343 268L370 262L378 245V226L365 210M378 236L428 186M409 164L430 180" />
        <path d="M343 268V345L328 358M370 262L372 345L375 355M343 345L372 345M224 222L226 300L248 333M248 325L328 358" />
      </g>
    </g>
    <CubeLabel $size={26} transform="translate(296 172) rotate(14)">TOP</CubeLabel>
    <CubeLabel $size={28} transform="translate(232 282) rotate(17)">FRONT</CubeLabel>
    <CubeLabel $size={23} transform="translate(384 306) rotate(-47)">RIGHT</CubeLabel>
    <g strokeWidth="5" fill="none">
      <path d="M194 225V347" stroke="#1c1cb0" />
      <path d="M196 347L232 310" stroke="#1f9a22" />
      <path d="M232 310L262 280" stroke="#7fd09a" />
      <path d="M196 347L320 389" stroke="#b01c1c" />
    </g>
  </svg>
);

const AxisLabel = styled.text`
  font: 400 24px "DejaVu Sans", sans-serif;
  fill: #050505;
  stroke: #050505;
  stroke-width: 1px;
`;

const AxisCross = () => (
  <svg width="90" height="100" viewBox="240 60 270 300" role="img" aria-label="Axis cross">
    <path d="M277 292V170" stroke="#211f86" strokeWidth="10" />
    <path d="M277 97L300 172L262 179L254 162Z" fill="#211f86" />
    <path d="M284 286L328 242" stroke="#218421" strokeWidth="9" />
    <path d="M360 208L354 240L336 250L317 226L336 212Z" fill="#218421" />
    <path d="M280 291L400 329" stroke="#862020" strokeWidth="10" />
    <path d="M470 353L392 350L405 310Z" fill="#862020" />
    <AxisLabel x="278" y="92">Z</AxisLabel>
    <AxisLabel x="363" y="202">Y</AxisLabel>
    <AxisLabel x="473" y="350">X</AxisLabel>
  </svg>
);

const TI = ({ children }) => (
  <svg viewBox="0 0 30 30" fill="none" aria-hidden="true">
    {children}
  </svg>
);

const apps = [
  ["Microsoft Edge", (
    <TI>
      <circle cx="15" cy="15" r="15" fill="#1a8fd8" />
      <path d="M1 11C4 2 14-1 22 2C30 6 32 16 27 20C23 22 19 20 19 18C23 12 14 5 1 11Z" fill="#3fc7b4" />
      <path d="M22 2C30 6 32 16 27 20C23 22 19 20 19 18C23 14 23 8 22 2Z" fill="#6bdc5a" />
      <path d="M8 19C7 13 11 10 15 11C11 14 13 22 21 22C24 22 26 21 28 20C25 28 17 31 11 28C8 25 8 22 8 19Z" fill="#0f559f" />
      <path d="M14 12C11 16 14 22 21 22Q26 22 30 19L27 20C23 22 19 20 19 18C20 15 18 12 14 12Z" fill="#252525" />
    </TI>
  )],
  ["Remote Desktop", (
    <TI>
      <path d="M3 0L26 3L24 21L1 17Z" fill="#d0d3dc" />
      <path d="M5 2L24 5L22 18L3 15Z" fill="#1a22b8" />
      <path d="M13 3L24 5L22 18L14 16Z" fill="#5f74e0" />
      <ellipse cx="13" cy="26" rx="8" ry="3" fill="#c6c6c6" />
      <circle cx="22" cy="23" r="7" fill="#dcdcdc" />
      <path d="M17 25L21 23L18 20M26 20L22 23L25 26" stroke="#2d9a2d" strokeWidth="1.8" />
    </TI>
  )],
  ["Weather", (
    <TI>
      <circle cx="15" cy="15" r="13" fill="#ffab0f" />
      <path d="M6 24C14 30 26 27 28 16Z" fill="#ff8c00" />
      <path d="M17 25Q13 25 13 21Q14 18 17 18Q20 12 25 16Q30 18 29 23Q28 25 26 25Z" fill="#f4f6fa" />
    </TI>
  )],
  ["Private Internet Access", (
    <TI>
      <path d="M7 13V9C7-2 23-2 23 9V13" stroke="#4aa044" strokeWidth="3.4" />
      <rect x="3" y="11" width="24" height="18" rx="4" fill="#4fa548" />
      <path d="M9 11V8C10 1 20 1 21 8V11Z" fill="#1e3c1c" />
      <path d="M11 7H13M17 7H19M12 9Q15 12 18 9" stroke="#4fa548" strokeWidth="1.6" />
      <circle cx="15" cy="18" r="3" fill="#222222" />
      <path d="M15 18V24" stroke="#222222" strokeWidth="3" />
    </TI>
  )],
  ["Thunderbird", (
    <TI>
      <circle cx="15" cy="17" r="13" fill="#1b6fd2" />
      <path d="M11 8C14 0 24 0 29 3C26 6 31 10 30 17C28 25 23 29 18 29C26 22 24 11 11 8Z" fill="#2f86e6" />
      <path d="M0 16C0 9 3 7 6 4C6 8 8 8 11 8C6 12 3 20 8 27C2 25 0 20 0 16Z" fill="#3c9bf0" />
      <circle cx="15" cy="15" r="7" fill="#e4f1fd" />
      <path d="M9 12L15 17L21 12" stroke="#7fb6ec" strokeWidth="1.6" />
    </TI>
  )],
  ["Calculator", (
    <TI>
      <rect x="4" y="0" width="23" height="30" rx="2" fill="#7d8690" />
      <rect x="7" y="3" width="17" height="5" fill="#45d3f5" />
      <path d="M7 10H12V15H7ZM13 10H18V15H13ZM19 10H24V15H19ZM7 16H12V21H7ZM13 16H18V21H13ZM7 22H12V27H7ZM13 22H18V27H13Z" fill="#dde1e5" />
      <path d="M19 16H24V27H19Z" fill="#174b94" />
    </TI>
  )],
  ["Vectric", (
    <TI>
      <rect width="30" height="30" rx="1" fill="#0878cf" />
      <path d="M0 6L5 8L15 20L26 6H30V11L19 25H11L0 11Z" fill="#15223a" />
      <path d="M0 12L11 25L15 30H0Z" fill="#095896" />
    </TI>
  )],
  ["Audio", (
    <TI>
      <rect x="2" y="2" width="26" height="26" fill="#0b0b0b" />
      <circle cx="15" cy="15" r="11" stroke="#ededed" strokeWidth="1.4" strokeDasharray="15 2" />
      <path d="M9 11V19M12 9V21M15 8V22M18 9V21M21 11V19" stroke="#f3f3f3" strokeWidth="1.8" />
    </TI>
  )],
  ["FreeCAD", <FreeCadLogo />],
  ["Green Note", (
    <TI>
      <rect width="30" height="30" rx="6" fill="#07ac45" />
      <path d="M8 6H14V24H8ZM16 6H22V24H16Z" fill="#ffffff" />
      <path d="M7 17L14 14M16 12L23 16" stroke="#07ac45" strokeWidth="1.2" />
    </TI>
  )],
  ["Fusion", (
    <TI>
      <path d="M1 2L6 0H28V21H6L1 23Z" fill="#ff6b00" />
      <path d="M1 2L6 0V21L1 23Z" fill="#ff9a45" />
      <path d="M4 21H28V30H6Z" fill="#8f3c08" />
      <text x="13" y="16" fontSize="15" fontWeight="700" fill="#ffffff" fontFamily="Lato, sans-serif">F</text>
      <text x="10" y="28" fontSize="6" fontWeight="700" fill="#ffffff" fontFamily="Lato, sans-serif">FUS</text>
    </TI>
  )],
  ["Inkscape", (
    <TI>
      <path d="M15 1L29 14C29 18 22 18 21 20L26 22L18 24L15 28L12 23L5 22L9 20C4 18 1 17 1 14Z" fill="#0d0d0d" />
      <path d="M15 2L28 14Q24 17 21 14L19 11L16 14L12 11L9 15L2 14Z" fill="#8d949e" />
      <path d="M15 2L22 9L17 8L14 10L8 9Z" fill="#f0f2f5" />
    </TI>
  )],
  ["File Explorer", (
    <TI>
      <path d="M1 3H12L15 6H28V25H1Z" fill="#e3a516" />
      <path d="M1 8H12L15 6H28V25H1Z" fill="#ffd45e" />
      <path d="M6 26V17Q6 15 8 15H21Q23 15 23 17V26H19V20H10V26Z" fill="#3b8ad8" />
    </TI>
  )],
  ["Orca Slicer", (
    <TI>
      <circle cx="15" cy="15" r="14.5" fill="#f5f5f5" />
      <path d="M5 7C9 3 15 4 20 4C24 6 26 12 23 18C20 24 13 27 9 23C5 19 8 12 5 7Z" fill="#2b2f31" />
      <path d="M23 11C20 18 14 21 7 24C12 17 16 14 23 11Z" fill="#0e9384" />
      <circle cx="16" cy="7" r="2" fill="#ffffff" />
    </TI>
  )],
];

/* ---------- assemblies ---------- */

const row1a = [["New", "newDoc"], ["Open", "open"], ["Save", "save"]];
const viewTools = [
  ["Fit all", "zoomFit"], ["Fit selection", "zoomSel"], ["Isometric", "iso", 1], ["Align to selection", "align"], null,
  ["Draw style", "drawStyle", 1], ["Bounding box selection", "boxSelect", 1], ["Sync view", "sync", 1], ["Measure", "caliper"],
];
const structureTools = [["Part", "part"], ["Group", "folder"], ["Link", "exporter", 1], ["Variable set", "braces"]];
const helperTools = [
  ["Body", "body"], ["Sketch", "sketch", 1], ["Validate sketch", "validate"], ["Check geometry", "pawn"],
  ["Shape binder", "patch"], ["Clone", "sheep"], ["Datum", "diamond", 1],
];
const modelingTools = [
  ["Pad", "pad"], ["Revolution", "revolve"], ["Loft", "loft"], ["Sweep", "sweep"], ["Helix", "helix"], ["Primitive", "prim", 1], null,
  ["Pocket", "pocket"], ["Hole", "hole"], ["Groove", "groove"], ["Subtractive loft", "loft", 0, 1], ["Subtractive sweep", "sweep", 0, 1],
  ["Subtractive helix", "helix", 0, 1], ["Subtractive primitive", "prim", 1, 1], null, ["Boolean", "boolean"],
];
const dressTools = [["Fillet", "dressA"], ["Chamfer", "dressB"], ["Draft", "draft"], ["Thickness", "thickness"]];
const patternTools = [["Mirrored", "mirror"], ["Linear pattern", "linear"], ["Polar pattern", "polar"], ["Multi transform", "multi"]];

const Shade = styled.span`
  display: flex;
  filter: brightness(${(p) => (p.$on ? 0.78 : 1)});
`;

const Tools = ({ items }) => (
  <ToolGroup>
    <Handle />
    {items.map((t, i) =>
      t ? (
        <ToolButton key={t[0]} type="button" aria-label={t[0]} $menu={Boolean(t[2])}>
          <Shade $on={t[3]}>{I[t[1]]}</Shade>
        </ToolButton>
      ) : (
        <ToolSeparator key={i} />
      )
    )}
  </ToolGroup>
);

const Dock = ({ title, right = 2, inset = 52, close = true }) => (
  <DockTitle $right={right} $inset={inset}>
    <h2>{title}</h2>
    <button type="button" aria-label={`Shade ${title}`}><PinIcon /></button>
    <button type="button" aria-label={`Float ${title}`}><FloatIcon /></button>
    {close && <button type="button" aria-label={`Close ${title}`}><CloseIcon /></button>}
  </DockTitle>
);

const Check = ({ label, on, indent = 2 }) => (
  <CheckRow $indent={indent}>
    <input type="checkbox" defaultChecked={on} />
    {label}
  </CheckRow>
);

const Spin = ({ id, value, width }) => (
  <SpinBox $width={width}>
    <input id={id} type="text" defaultValue={value} />
    <ExprIcon />
    <Steppers>
      <StepButton type="button" aria-label="Increase" $up />
      <StepButton type="button" aria-label="Decrease" />
    </Steppers>
  </SpinBox>
);

const menus = ["File", "Edit", "View", "Tools", "Macro", "Sketch", "Part Design", "Windows", "Help"];

const nodes = [
  { name: "Ping Pong table lines v3", level: 0, open: true, bold: true, icon: <DocIcon /> },
  { name: "Body", level: 1, open: true, bold: true, active: true, eye: <Eye />, icon: <svg width="17" height="19">{BlueBody}</svg>, internal: "Body" },
  { name: "Origin", level: 2, dim: true, eye: <EyeOff />, icon: <OriginIcon />, internal: "Origin" },
  { name: "Pad", level: 2, eye: <Eye />, icon: <PadTipIcon />, internal: "Pad" },
];

export default function App() {
  return (
    <Window>
      <GlobalStyle />
      <TitleBar>
        <FreeCadLogo size={19} />
        <Title>* Ping Pong table lines v3 - FreeCAD 1.0.0</Title>
        <WindowButton type="button" aria-label="Minimize">
          <svg width="12" height="12" stroke="#000000"><path d="M0 6.500H12" /></svg>
        </WindowButton>
        <WindowButton type="button" aria-label="Maximize">
          <svg width="12" height="12" fill="none" stroke="#000000"><path d="M0.500 0.500H11.500V11.500H0.500Z" /></svg>
        </WindowButton>
        <WindowButton type="button" aria-label="Close">
          <svg width="12" height="12" stroke="#000000"><path d="M0 0L12 12M12 0L0 12" /></svg>
        </WindowButton>
      </TitleBar>

      <MenuBar>
        {menus.map((m) => (
          <MenuItem key={m} type="button"><u>{m[0]}</u>{m.slice(1)}</MenuItem>
        ))}
      </MenuBar>

      <ToolRow>
        <Tools items={row1a} />
        <ToolGroup>
          <Handle />
          <HistoryButton type="button" aria-label="Undo">{I.undo}</HistoryButton>
          <HistoryButton type="button" aria-label="Redo">{I.redo}</HistoryButton>
          <ToolSeparator />
          <ToolButton type="button" aria-label="Refresh">{I.refresh}</ToolButton>
        </ToolGroup>
        <ToolGroup>
          <Handle />
          <SelectBox $width={175} $icon>
            <select aria-label="Workbench" defaultValue="Part Design"><option>Part Design</option></select>
            {BlueBody}
          </SelectBox>
        </ToolGroup>
        <Tools items={viewTools} />
        <Tools items={structureTools} />
        <Tools items={[["What's this?", "whats"]]} />
      </ToolRow>

      <ToolRow>
        <Tools items={helperTools} />
        <Tools items={modelingTools} />
        <Tools items={dressTools} />
        <Tools items={patternTools} />
      </ToolRow>

      <Main>
        <LeftDock>
          <Dock title="Selection View" />
          <SearchRow>
            <input type="text" placeholder="Search" aria-label="Search selection" />
            <button type="button" aria-label="Clear">
              <svg viewBox="0 0 15 14">
                <path d="M0 7L5 0H15V14H5Z" fill="#c5d9ee" />
                <path d="M5 4L11 10M11 4L5 10" stroke="#3f6ea8" strokeWidth="2" />
              </svg>
            </button>
            <span>0</span>
          </SearchRow>
          <DarkPane />
          <PickRow><Check label="Picked object list" indent={0} /></PickRow>
          <Dock title="Model" />
          <DarkPane>
            <Tree>
              <colgroup><col style={{ width: 230 }} /><col style={{ width: 89 }} /><col /></colgroup>
              <thead>
                <tr><th>Labels &amp; Attributes</th><th>Description</th><th>Internal name</th></tr>
              </thead>
              <tbody>
                {nodes.map((n) => (
                  <tr key={n.name}>
                    <td>
                      <TreeLine $level={n.level} $bold={n.bold} $dim={n.dim}>
                        <Expander type="button" aria-label={`Toggle ${n.name}`} $open={n.open} />
                        <TreeCell $active={n.active}>
                          {n.eye && <Slot>{n.eye}</Slot>}
                          <Slot>{n.icon}</Slot>
                          <span>{n.name}</span>
                        </TreeCell>
                      </TreeLine>
                    </td>
                    <td />
                    <td><Dim $on={n.dim}>{n.internal}</Dim></td>
                  </tr>
                ))}
              </tbody>
            </Tree>
          </DarkPane>
          <div />
          <DarkPane />
          <div />
        </LeftDock>

        <Center>
          <Viewport>
            <Model />
            <NavCubeBox><NavCube /></NavCubeBox>
            <AxisBox><AxisCross /></AxisBox>
          </Viewport>
          <TabStrip>
            <DocTab $width={109}><FreeCadLogo size={19} /></DocTab>
            <DocTab $width={239} $active>
              <svg width="13" height="18"><path d="M2 5H9L13 9V18H2Z" fill="#f0f0f0" /></svg>
            </DocTab>
          </TabStrip>
        </Center>

        <RightDock>
          <Dock title="Tasks" right={5} inset={33} close={false} />
          <DialogButtons>
            <DialogButton type="button">OK</DialogButton>
            <DialogButton type="button">Cancel</DialogButton>
          </DialogButtons>
          <TaskBox>
            <TaskHeader>
              <PadIcon />
              <h2>Pad parameters</h2>
              <button type="button" aria-label="Collapse">
                <svg width="21" height="21" viewBox="0 0 21 21" fill="none">
                  <circle cx="10.5" cy="10.5" r="9" stroke="#5d6068" strokeWidth="2" />
                  <path d="M7 10L10.500 6L14 10M7 15L10.500 11L14 15" stroke="#b8babf" strokeWidth="1.8" />
                </svg>
              </button>
            </TaskHeader>
            <TaskBody>
              <FieldRow>
                <label htmlFor="type">Type</label>
                <SelectBox $width={172}>
                  <select id="type" defaultValue="Dimension"><option>Dimension</option></select>
                </SelectBox>
              </FieldRow>
              <Space $size={8} />
              <FieldRow $height={32}>
                <label htmlFor="length">Length</label>
                <Spin id="length" value="10.00 mm" width={172} />
              </FieldRow>
              <Space $size={10} />
              <Check label="Symmetric to plane" />
              <Space $size={12} />
              <Check label="Reversed" />
              <Space $size={29} />
              <Group>
                <legend>Direction</legend>
                <FieldRow>
                  <label htmlFor="edge">Direction/edge:</label>
                  <SelectBox $width={140}>
                    <select id="edge" defaultValue="Sketch normal"><option>Sketch normal</option></select>
                  </SelectBox>
                </FieldRow>
                <Space $size={10} />
                <Check label="Show direction" />
                <Space $size={12} />
                <Check label="Length along sketch normal" on />
              </Group>
              <Space $size={8} />
              <FieldRow $height={32}>
                <label htmlFor="taper">Taper angle</label>
                <Spin id="taper" value="0.00 °" width={147} />
              </FieldRow>
              <Space $size={8} />
              <Rule />
              <Space $size={9} />
              <Check label="Update view" on />
            </TaskBody>
          </TaskBox>
        </RightDock>
      </Main>

      <Taskbar>
        <TaskSearch type="text" placeholder="Type here to search" aria-label="Type here to search" />
        {apps.map(([name, art]) => (
          <TaskButton key={name} type="button" aria-label={name} $active={name === "FreeCAD"} $running={name === "FreeCAD" || name === "Orca Slicer"}>
            {art}
          </TaskButton>
        ))}
      </Taskbar>
    </Window>
  );
}
